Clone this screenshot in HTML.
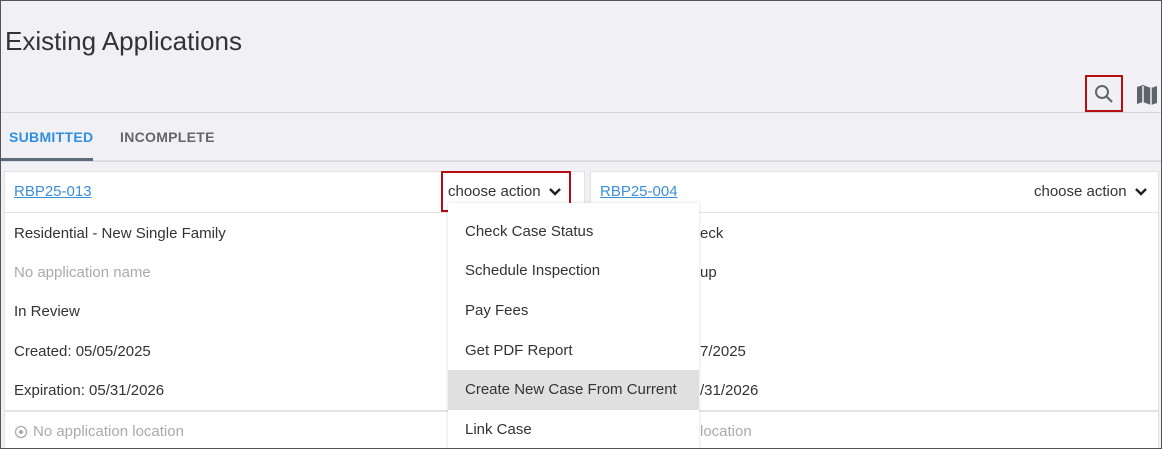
<!DOCTYPE html><html><head><style>
html,body{margin:0;width:1162px;height:449px;overflow:hidden}
body{background:#f1f0f5;font-family:"Liberation Sans",sans-serif;position:relative;color:#333}
.a{position:absolute}
.frame{position:absolute;left:0;top:0;width:1162px;height:449px;box-sizing:border-box;border:1px solid #555;pointer-events:none;z-index:9}
.card{background:#fff;border:1px solid #e2e2e2;box-sizing:border-box}
.row{position:absolute;font-size:15px;color:#333}
.lnk{color:#3a8fd8;text-decoration:underline;font-size:15px}
.mi{position:absolute;left:0;width:251px;height:40px;line-height:40px;padding-left:17px;box-sizing:border-box;font-size:15px;color:#333}
</style></head><body>
<div class="frame"></div>
<div class="a" style="left:5px;top:26px;font-size:26px;color:#333">Existing Applications</div>
<div class="a" style="left:1085px;top:75px;width:38px;height:37px;border:2px solid #b50d12;box-sizing:border-box"></div>
<svg class="a" style="left:1093px;top:83px" width="22" height="22" viewBox="0 0 22 22"><circle cx="9" cy="9" r="6" fill="none" stroke="#666" stroke-width="2"/><line x1="13.5" y1="13.5" x2="19" y2="19" stroke="#666" stroke-width="2.2"/></svg>
<svg class="a" style="left:1136px;top:83px" width="22" height="24" viewBox="0 0 22 24"><path d="M1 4l6-2 8 3 6-2v17l-6 2-8-3-6 2z" fill="#5f636b"/><path d="M7 3v17M15 5v17" stroke="#f1f0f5" stroke-width="1.5"/></svg>
<div class="a" style="left:0;top:112px;width:1162px;height:1px;background:#d5d5d8"></div>
<div class="a" style="left:9px;top:129px;font-size:14px;font-weight:bold;color:#2f8fe0;letter-spacing:.3px">SUBMITTED</div>
<div class="a" style="left:120px;top:129px;font-size:14px;font-weight:bold;color:#666;letter-spacing:.3px">INCOMPLETE</div>
<div class="a" style="left:0;top:160px;width:1162px;height:2px;background:#dcdce0"></div>
<div class="a" style="left:1px;top:158px;width:92px;height:3px;background:#5b6b7a"></div>

<div class="a card" style="left:4px;top:171px;width:581px;height:278px"></div>
<div class="a" style="left:5px;top:212px;width:579px;height:1px;background:#e3e3e3"></div>
<div class="a" style="left:5px;top:410px;width:579px;height:2px;background:#e3e3e3"></div>
<div class="a lnk" style="left:14px;top:183px">RBP25-013</div>
<div class="a" style="left:441px;top:171px;width:130px;height:41px;border:2px solid #b50d12;box-sizing:border-box"></div>
<div class="a" style="left:448px;top:183px;font-size:15px;color:#333">choose action</div>
<svg class="a" style="left:548px;top:186px" width="14" height="12" viewBox="0 0 14 12"><path d="M2 3l5 5 5-5" fill="none" stroke="#222" stroke-width="2.5"/></svg>
<div class="row" style="left:14px;top:225px">Residential - New Single Family</div>
<div class="row" style="left:14px;top:264px;color:#aaa">No application name</div>
<div class="row" style="left:14px;top:303px">In Review</div>
<div class="row" style="left:14px;top:343px">Created: 05/05/2025</div>
<div class="row" style="left:14px;top:382px">Expiration: 05/31/2026</div>
<svg class="a" style="left:14px;top:425px" width="14" height="14" viewBox="0 0 14 14"><circle cx="7" cy="7" r="5.5" fill="none" stroke="#aaa" stroke-width="1.3"/><circle cx="7" cy="7" r="2" fill="#aaa"/></svg>
<div class="row" style="left:33px;top:423px;color:#aaa">No application location</div>

<div class="a card" style="left:590px;top:171px;width:569px;height:278px"></div>
<div class="a" style="left:591px;top:212px;width:567px;height:1px;background:#e3e3e3"></div>
<div class="a" style="left:591px;top:410px;width:567px;height:2px;background:#e3e3e3"></div>
<div class="a lnk" style="left:600px;top:183px">RBP25-004</div>
<div class="a" style="left:1034px;top:183px;font-size:15px;color:#333">choose action</div>
<svg class="a" style="left:1134px;top:186px" width="14" height="12" viewBox="0 0 14 12"><path d="M2 3l5 5 5-5" fill="none" stroke="#222" stroke-width="2.5"/></svg>
<div class="row" style="left:700px;top:225px">eck</div>
<div class="row" style="left:700px;top:264px">up</div>
<div class="row" style="left:700px;top:343px">7/2025</div>
<div class="row" style="left:700px;top:382px">/31/2026</div>
<div class="row" style="left:700px;top:423px;color:#aaa">location</div>

<div class="a" style="left:448px;top:203px;width:251px;height:250px;background:#fff;box-shadow:0 0 3px rgba(0,0,0,.15)">
<div class="mi" style="top:9px">Check Case Status</div>
<div class="mi" style="top:48px">Schedule Inspection</div>
<div class="mi" style="top:88px">Pay Fees</div>
<div class="mi" style="top:128px">Get PDF Report</div>
<div class="mi" style="top:167px;background:#e0e0e0">Create New Case From Current</div>
<div class="mi" style="top:207px">Link Case</div>
</div>
</body></html>
